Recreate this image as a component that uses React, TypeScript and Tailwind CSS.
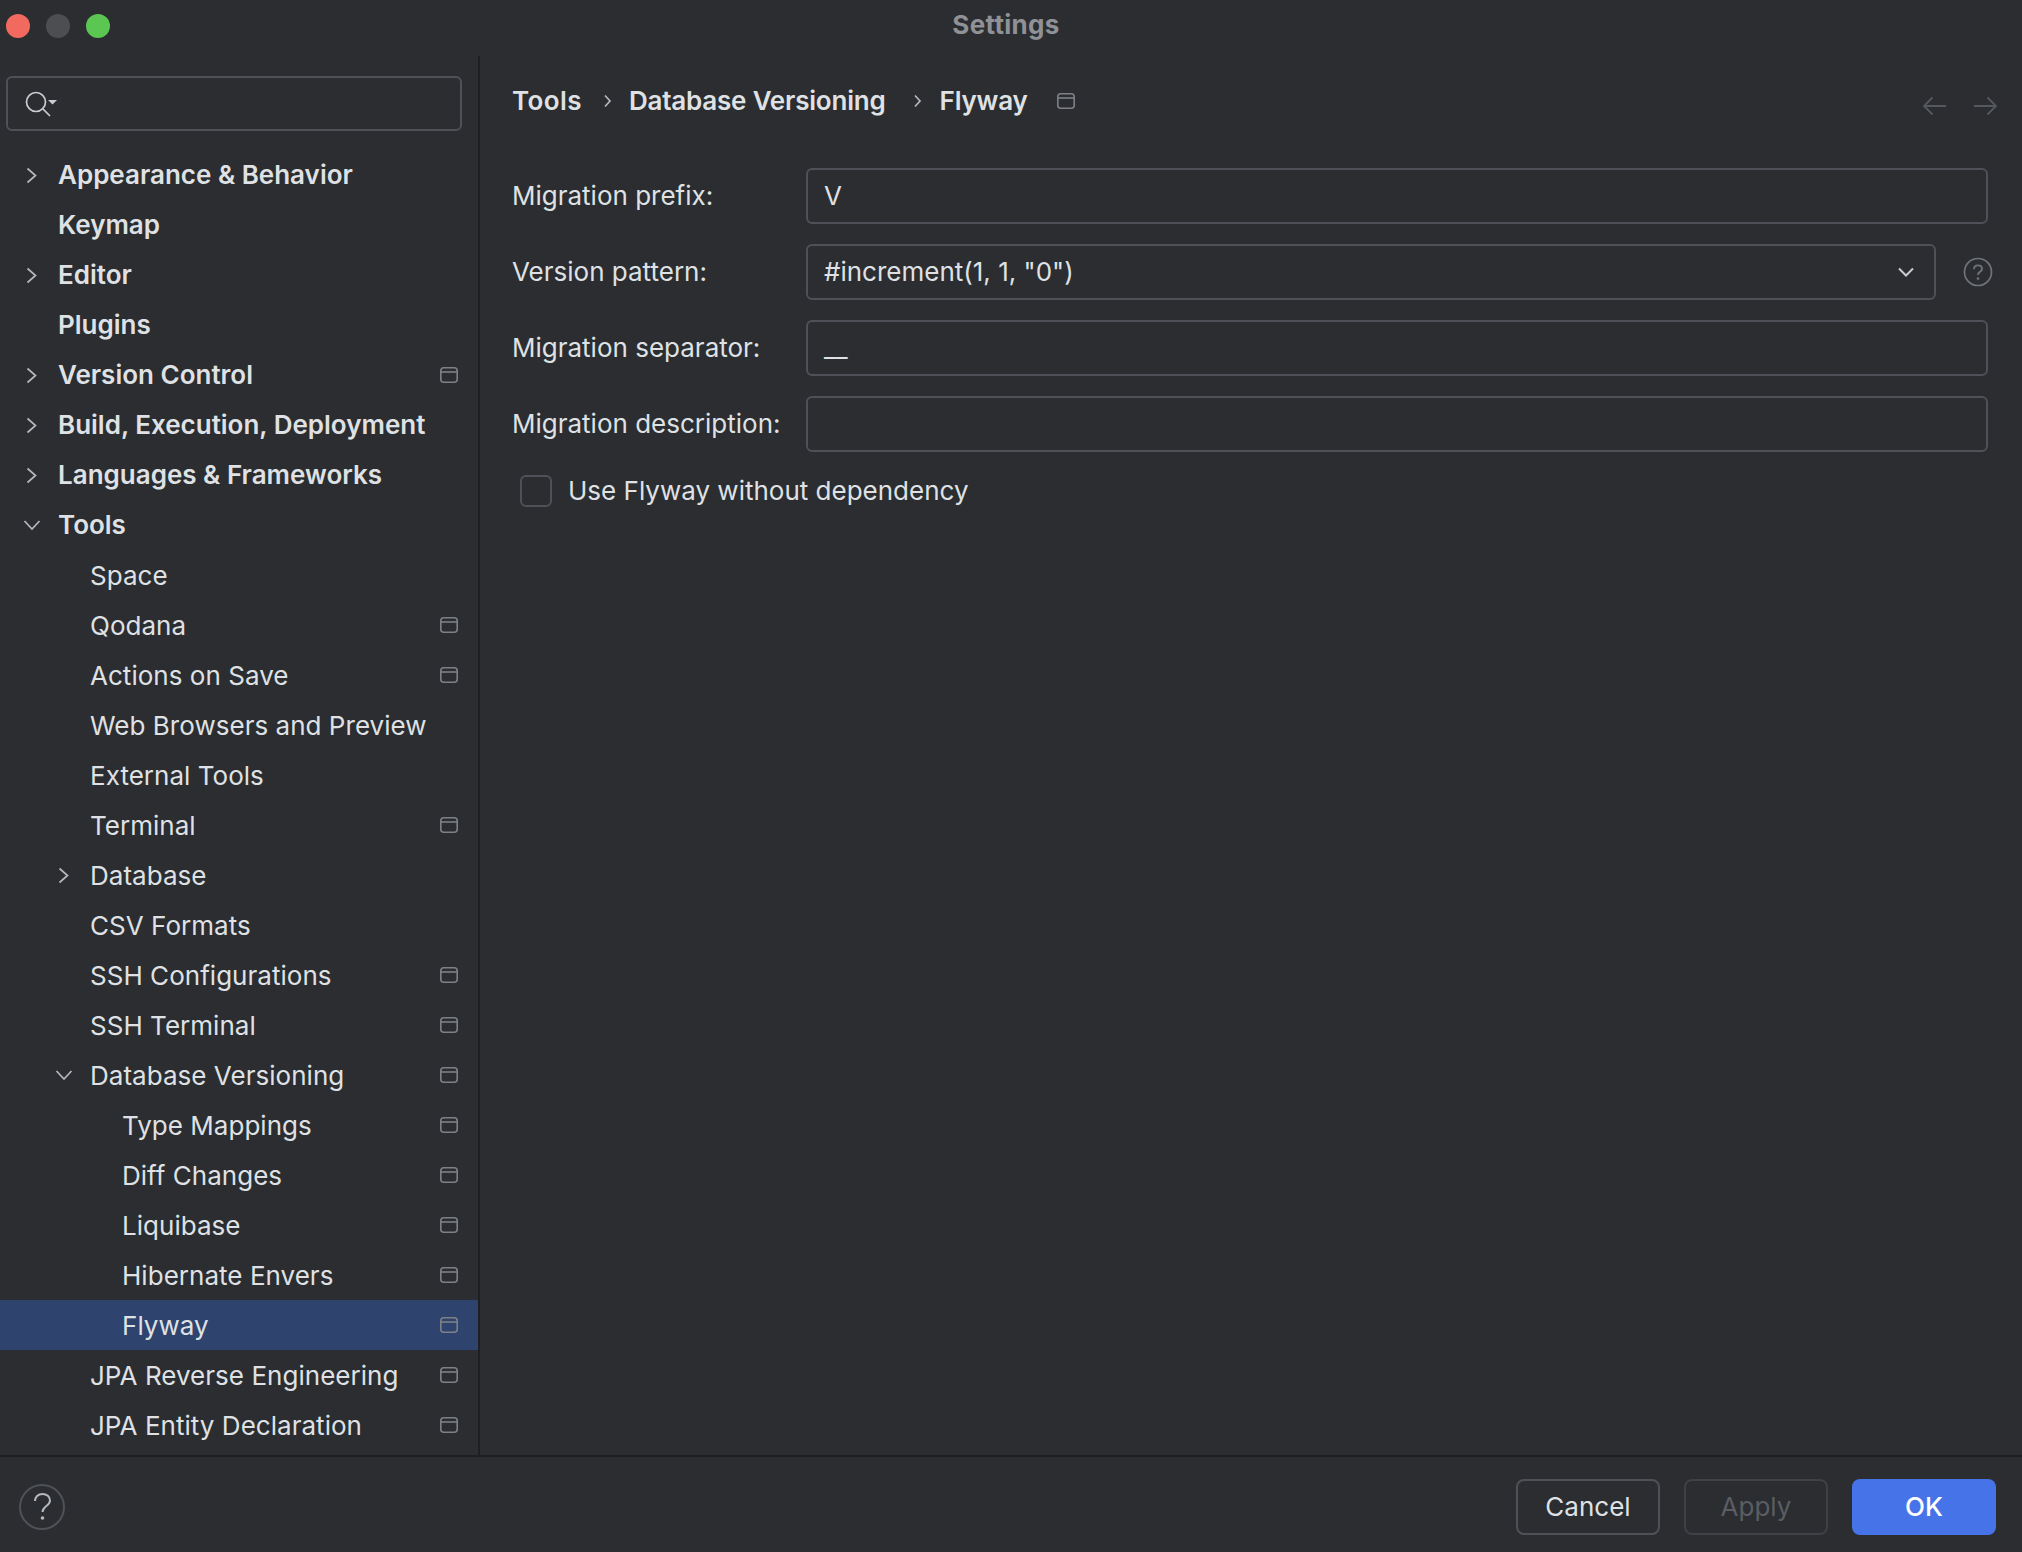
const font = "font-['Inter','Liberation_Sans',sans-serif]";

type Row = { label: string; level: number; arrow?: "right" | "down"; pin?: boolean; active?: boolean };

const rows: Row[] = [
  { label: "Appearance & Behavior", level: 0, arrow: "right" },
  { label: "Keymap", level: 0 },
  { label: "Editor", level: 0, arrow: "right" },
  { label: "Plugins", level: 0 },
  { label: "Version Control", level: 0, arrow: "right", pin: true },
  { label: "Build, Execution, Deployment", level: 0, arrow: "right" },
  { label: "Languages & Frameworks", level: 0, arrow: "right" },
  { label: "Tools", level: 0, arrow: "down" },
  { label: "Space", level: 1 },
  { label: "Qodana", level: 1, pin: true },
  { label: "Actions on Save", level: 1, pin: true },
  { label: "Web Browsers and Preview", level: 1 },
  { label: "External Tools", level: 1 },
  { label: "Terminal", level: 1, pin: true },
  { label: "Database", level: 1, arrow: "right" },
  { label: "CSV Formats", level: 1 },
  { label: "SSH Configurations", level: 1, pin: true },
  { label: "SSH Terminal", level: 1, pin: true },
  { label: "Database Versioning", level: 1, arrow: "down", pin: true },
  { label: "Type Mappings", level: 2, pin: true },
  { label: "Diff Changes", level: 2, pin: true },
  { label: "Liquibase", level: 2, pin: true },
  { label: "Hibernate Envers", level: 2, pin: true },
  { label: "Flyway", level: 2, pin: true, active: true },
  { label: "JPA Reverse Engineering", level: 1, pin: true },
  { label: "JPA Entity Declaration", level: 1, pin: true },
];

function Pin({ className = "" }: { className?: string }) {
  return (
    <svg width="18" height="16" viewBox="0 0 18 16" fill="none" stroke="#7d8087" strokeWidth="1.6" className={className}>
      <rect x="0.8" y="0.8" width="16.4" height="14.4" rx="3" />
      <path d="M0.8 5h16.4" />
    </svg>
  );
}

function Arrow({ dir }: { dir: "right" | "down" }) {
  if (dir === "right") {
    return (
      <svg width="12" height="17" viewBox="0 0 12 17" fill="none" stroke="#b4b8bf" strokeWidth="1.7">
        <path d="M1.5 1.5l8 7-8 7" />
      </svg>
    );
  }
  return (
    <svg width="18" height="12" viewBox="0 0 18 12" fill="none" stroke="#b4b8bf" strokeWidth="1.7">
      <path d="M1.5 2l7.5 8 7.5-8" />
    </svg>
  );
}

function TreeRow({ row }: { row: Row }) {
  const pad = row.level === 0 ? "pl-[58px]" : row.level === 1 ? "pl-[90px]" : "pl-[122px]";
  const arrowPos = row.level === 0 ? "left-[23px]" : "left-[55px]";
  return (
    <div className={`relative flex h-[50px] shrink-0 items-center justify-between pr-[20px] ${pad} ${row.active ? "bg-[#2e436e]" : ""}`}>
      {row.arrow && (
        <span className={`absolute top-0 flex h-[50px] w-[18px] items-center justify-center ${arrowPos}`}>
          <Arrow dir={row.arrow} />
        </span>
      )}
      <span className={`text-[26px] text-[#dfe1e5] ${row.level === 0 ? "pb-[2px] font-semibold" : "font-normal tracking-[0.03px]"}`}>{row.label}</span>
      {row.pin && <Pin />}
    </div>
  );
}

function Field({ label, value, combo }: { label: string; value?: string; combo?: boolean }) {
  return (
    <div className="flex h-[56px] items-center">
      <span className="w-[294px] shrink-0 pb-[2px] text-[26px] text-[#dfe1e5]">{label}</span>
      <div className={`flex h-[56px] items-center rounded-[6px] border-2 border-[#4e5157] pl-[16px] pr-[20px] text-[26px] text-[#dfe1e5] ${combo ? "w-[1130px] justify-between" : "w-[1182px]"}`}>
        <span className="pb-[2px]">{value}</span>
        {combo && (
          <svg width="16" height="10" viewBox="0 0 16 10" fill="none" stroke="#c9ccd2" strokeWidth="2">
            <path d="M1 1.5l7 7 7-7" />
          </svg>
        )}
      </div>
      {combo && (
        <svg width="30" height="30" viewBox="0 0 30 30" className="ml-[27px]" fill="none">
          <circle cx="15" cy="15" r="13.5" stroke="#6f737a" strokeWidth="1.7" />
          <path d="M11 12.2c0-2.3 1.8-3.8 4-3.8s4 1.4 4 3.5c0 3-4 2.9-4 6" stroke="#6f737a" strokeWidth="1.9" />
          <circle cx="15" cy="21.6" r="1.3" fill="#6f737a" />
        </svg>
      )}
    </div>
  );
}

export default function App() {
  return (
    <div className={`flex h-[1552px] w-[2022px] flex-col overflow-hidden bg-[#2b2d30] ${font}`}>
      {/* title bar */}
      <div className="relative flex h-[56px] shrink-0 items-start justify-center pr-[10px] pt-[9px]">
        <div className="absolute left-[6px] top-[14px] flex gap-[16px]">
          <span className="h-[24px] w-[24px] rounded-full bg-[#f26a5f]" />
          <span className="h-[24px] w-[24px] rounded-full bg-[#4d4e51]" />
          <span className="h-[24px] w-[24px] rounded-full bg-[#5cc653]" />
        </div>
        <span className="text-[26px] font-bold leading-[32px] tracking-[0.3px] text-[#8f9196]">Settings</span>
      </div>

      <div className="flex min-h-0 flex-1">
        {/* sidebar */}
        <div className="flex w-[480px] shrink-0 flex-col overflow-hidden border-r-2 border-[#1e1f22]">
          <div className="ml-[6px] mt-[20px] flex h-[55px] w-[456px] shrink-0 items-center rounded-[6px] border-2 border-[#4e5157] pl-[17px]">
            <svg width="34" height="26" viewBox="0 0 34 26" fill="none" stroke="#c9ccd2" strokeWidth="1.7">
              <circle cx="11" cy="11" r="9.5" />
              <path d="M18 18l7 7" />
              <path d="M23 9h9l-4.5 4.5z" fill="#c9ccd2" stroke="none" />
            </svg>
          </div>
          <div className="mt-[19px] flex flex-col">
            {rows.map((r) => (
              <TreeRow key={r.label} row={r} />
            ))}
          </div>
        </div>

        {/* content */}
        <div className="flex-1 pl-[32px]">
          <div className="flex h-[90px] items-center justify-between">
            <div className="flex items-center text-[26px] font-semibold text-[#dfe1e5]">
              <span className="pb-[2px] tracking-[0.4px]">Tools</span>
              <svg width="8" height="14" viewBox="0 0 8 14" fill="none" stroke="#b4b8bf" strokeWidth="1.7" className="ml-[22px] mr-[17px]">
                <path d="M1 1.5l5 5.5-5 5.5" />
              </svg>
              <span className="pb-[2px] tracking-[-0.2px]">Database Versioning</span>
              <svg width="8" height="14" viewBox="0 0 8 14" fill="none" stroke="#b4b8bf" strokeWidth="1.7" className="ml-[28px] mr-[18px]">
                <path d="M1 1.5l5 5.5-5 5.5" />
              </svg>
              <span className="pb-[2px] tracking-[-0.2px]">Flyway</span>
              <Pin className="ml-[29px]" />
            </div>
            <div className="mr-[24px] mt-[10px] flex gap-[28px]">
              <svg width="24" height="20" viewBox="0 0 24 20" fill="none" stroke="#55585e" strokeWidth="1.8">
                <path d="M24 10H2M10.5 1.5L2 10l8.5 8.5" />
              </svg>
              <svg width="24" height="20" viewBox="0 0 24 20" fill="none" stroke="#55585e" strokeWidth="1.8">
                <path d="M0 10h22M13.5 1.5L22 10l-8.5 8.5" />
              </svg>
            </div>
          </div>
          <div className="mt-[22px] flex flex-col gap-[20px]">
            <Field label="Migration prefix:" value="V" />
            <Field label="Version pattern:" value={'#increment(1, 1, "0")'} combo />
            <Field label="Migration separator:" value="__" />
            <Field label="Migration description:" />
          </div>
          <label className="ml-[8px] mt-[19px] flex items-center">
            <span className="h-[32px] w-[32px] rounded-[6px] border-2 border-[#4e5157]" />
            <span className="ml-[16px] text-[26px] text-[#dfe1e5]">Use Flyway without dependency</span>
          </label>
        </div>
      </div>

      {/* footer */}
      <div className="flex h-[97px] shrink-0 items-center justify-between border-t-2 border-[#1e1f22] pl-[19px] pr-[26px] pt-[4px]">
        <svg width="46" height="46" viewBox="0 0 46 46" fill="none">
          <circle cx="23" cy="23" r="22" stroke="#4e5157" strokeWidth="2" />
          <path d="M16 17c0-4 3-7 7.5-7 4.3 0 7.5 2.8 7.5 6.5 0 5.5-7.5 5.5-7.5 11.5" stroke="#b4b8bf" strokeWidth="2" />
          <circle cx="23.5" cy="34" r="1.8" fill="#b4b8bf" />
        </svg>
        <div className="flex gap-[24px]">
          <button className="h-[56px] w-[144px] rounded-[8px] border-2 border-[#4e5157] text-[26px] text-[#dfe1e5]">Cancel</button>
          <button className="h-[56px] w-[144px] rounded-[8px] border-2 border-[#3f4146] text-[26px] text-[#5a5d63]">Apply</button>
          <button className="h-[56px] w-[144px] rounded-[8px] bg-[#4674e8] text-[26px] font-medium text-white">OK</button>
        </div>
      </div>
    </div>
  );
}
